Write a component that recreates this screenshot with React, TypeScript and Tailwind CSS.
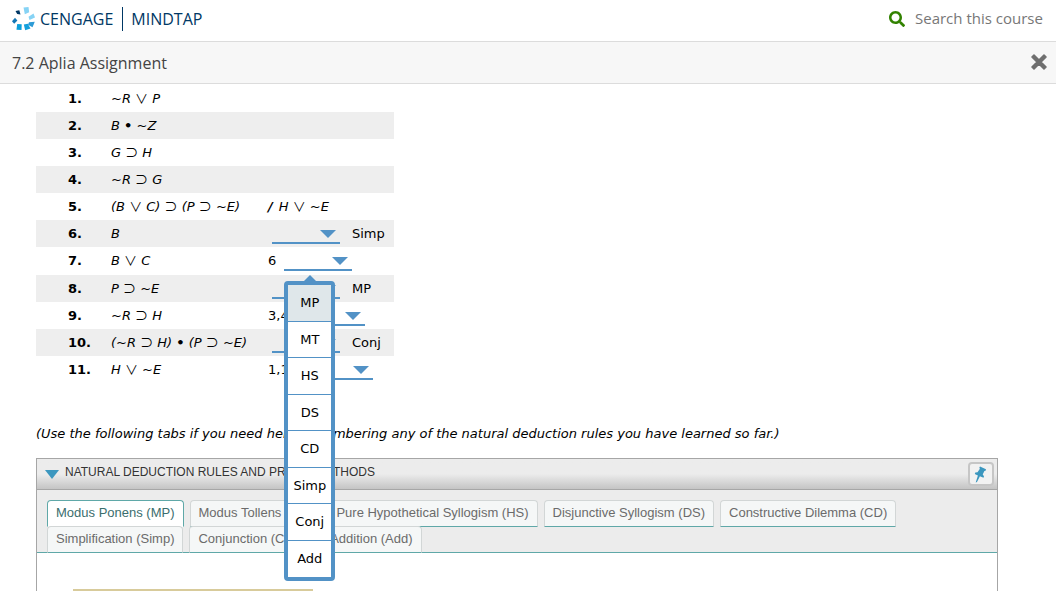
import { Fragment, useState } from "react";
import { FaSearch } from "react-icons/fa";

const rules = ["MP", "MT", "HS", "DS", "CD", "Simp", "Conj", "Add"];

type Line = {
  formula: string;
  goal?: string;
  refs?: string;
  picker?: boolean;
  rule?: string;
  menu?: boolean;
};

const lines: Line[] = [
  { formula: "~R ∨ P" },
  { formula: "B • ~Z" },
  { formula: "G ⊃ H" },
  { formula: "~R ⊃ G" },
  { formula: "(B ∨ C) ⊃ (P ⊃ ~E)", goal: "H ∨ ~E" },
  { formula: "B", picker: true, rule: "Simp" },
  { formula: "B ∨ C", refs: "6", picker: true, menu: true },
  { formula: "P ⊃ ~E", picker: true, rule: "MP" },
  { formula: "~R ⊃ H", refs: "3,4", picker: true },
  { formula: "(~R ⊃ H) • (P ⊃ ~E)", picker: true, rule: "Conj" },
  { formula: "H ∨ ~E", refs: "1,10", picker: true },
];

const tabRows = [
  [
    "Modus Ponens (MP)",
    "Modus Tollens (MT)",
    "Pure Hypothetical Syllogism (HS)",
    "Disjunctive Syllogism (DS)",
    "Constructive Dilemma (CD)",
  ],
  ["Simplification (Simp)", "Conjunction (Conj)", "Addition (Add)"],
];

function Logo() {
  return (
    <svg viewBox="0 0 24 24" className="h-6 w-6" aria-hidden="true">
      <path d="M11.500.5 16.500 0l.7 5.300-4.400 1.900z" fill="#86d3f5" />
      <path d="M16.500 9.800l5-3.300L23 10.500l-5.500 2.500z" fill="#86d3f5" />
      <path d="M17 15.200l5.800-.4-2.300 5.400-4.500-2.400z" fill="#2d9bd6" />
      <path d="M11.800 17.500l4-.8 2.700 4.800-5.300 1.800z" fill="#14a0dc" />
      <path d="M5.200 17l4.500.3-.2 5.700-5-.3z" fill="#0a9fdb" />
      <path d="M3 10.800l2.400 2.600-3.200 3.300L0 14.200z" fill="#1377b5" />
      <path d="M3.500 4l3.800-.8 1.200 4.300-3.300-.5z" fill="#003865" />
    </svg>
  );
}

function PinIcon() {
  return (
    <svg viewBox="0 0 16 18" className="h-[18px] w-4" aria-hidden="true">
      <path
        d="M7 1.500 13 4.200 12.600 5.800 11.400 5.900 9.700 9.600 11 11.300 10.500 12.800 6.900 11.300 4 17 2.700 17.400 4.900 10.400 1.800 9 2.300 7.500 4.500 7.300 6.900 3.800 6.300 2.700z"
        fill="currentColor"
      />
    </svg>
  );
}

function Formula({ text }: { text: string }) {
  return (
    <>
      {text.split(/([∨⊃•])/).map((part, i) => {
        if (part === "•") return <span key={i} className="font-bold not-italic">{part}</span>;
        if (part === "∨" || part === "⊃")
          return <span key={i} className="font-['Noto_Sans_CJK_JP',sans-serif] leading-none not-italic">{part}</span>;
        return <Fragment key={i}>{part}</Fragment>;
      })}
    </>
  );
}

function RulePicker({ label, menu }: { label: string; menu?: boolean }) {
  const [open, setOpen] = useState(Boolean(menu));
  const [value, setValue] = useState("");
  return (
    <span className="relative inline-flex h-5 w-[68px] border-b-2 border-[#5292c6]">
      <select
        aria-label={label}
        value={value}
        onChange={(e) => setValue(e.target.value)}
        className="w-full appearance-none bg-transparent pl-2 outline-none"
      >
        <option value=""></option>
        {rules.map((r) => (
          <option key={r}>{r}</option>
        ))}
      </select>
      <svg viewBox="0 0 16 8" className="pointer-events-none absolute top-1.5 right-1 h-2 w-4" aria-hidden="true">
        <path d="M0 0h16L8 8z" fill="#5292c6" />
      </svg>
      {open && (
        <div className="absolute top-6 left-0 z-10 flex flex-col items-center">
          <svg viewBox="0 0 16 8" className="-mb-0.5 h-2 w-4" aria-hidden="true">
            <path d="M0 8h16L8 0z" fill="#5292c6" />
          </svg>
          <div
            role="listbox"
            aria-label={label}
            className="grid h-[300px] w-[51px] grid-rows-8 rounded border-4 border-[#5292c6] bg-white"
          >
            {rules.map((r, i) => (
              <button
                key={r}
                role="option"
                aria-selected={i === 0}
                onClick={() => {
                  setValue(r);
                  setOpen(false);
                }}
                className="flex items-center justify-center border-b border-[#5292c6] last:border-b-0 aria-selected:bg-[#dfe7ea]"
              >
                {r}
              </button>
            ))}
          </div>
        </div>
      )}
    </span>
  );
}

export default function App() {
  const [tab, setTab] = useState("Modus Ponens (MP)");
  return (
    <div className="flex min-h-screen flex-col bg-white font-['DejaVu_Sans',sans-serif] text-[13px] text-black">
      <header className="flex h-[42px] items-center justify-between border-b border-[#dcdcdc] pr-3 pb-1 pl-3 font-['Open_Sans',sans-serif]">
        <a href="#home" className="flex items-center text-[16px] text-[#003865]">
          <Logo />
          <span className="ml-1">CENGAGE</span>
          <span className="mr-2 ml-[9px] h-6 w-px bg-[#003865]" />
          <span>MINDTAP</span>
        </a>
        <label className="flex items-center gap-2.5">
          <FaSearch className="size-4 text-[#328200]" />
          <input
            aria-label="Search this course"
            placeholder="Search this course"
            className="w-[129px] text-[15px] outline-none placeholder:text-[#777777]"
          />
        </label>
      </header>
      <div className="flex h-[42px] items-center justify-between border-b border-[#dcdcdc] bg-[#f7f7f7] pr-2 pl-3 font-['Open_Sans',sans-serif]">
        <h1 className="text-[16px] text-[#444444]">7.2 Aplia Assignment</h1>
        <button aria-label="Close" className="pb-0.5 text-[#6f6f6f]">
          <svg viewBox="0 0 18 18" className="size-[18px]" aria-hidden="true">
            <path
              d="M4 2 9 7l5-5 2 2L11 9l5 5-2 2L9 11l-5 5-2-2L7 9 2 4z"
              fill="currentColor"
              stroke="currentColor"
              strokeWidth="1.600"
              strokeLinejoin="round"
            />
          </svg>
        </button>
      </div>

      <main className="flex flex-1 flex-col pr-[58px] pl-9">
        <table className="mt-px w-[358px] table-fixed">
          <colgroup>
            <col className="w-[75px]" />
            <col className="w-[157px]" />
            <col />
          </colgroup>
          <tbody>
            {lines.map((line, i) => (
              <tr key={i} className={line.menu ? "h-7 even:bg-[#eeeeee]" : "h-[27px] even:bg-[#eeeeee]"}>
                <th scope="row" className="py-0 pl-8 text-left font-bold">
                  {i + 1}.
                </th>
                <td className="p-0 whitespace-nowrap italic">
                  <Formula text={line.formula} />
                </td>
                <td className="p-0 whitespace-nowrap">
                  {line.goal && (
                    <span className="flex gap-1.5 italic">
                      <b>/</b>
                      <span>
                        <Formula text={line.goal} />
                      </span>
                    </span>
                  )}
                  {line.picker && (
                    <span className="flex h-[27px] items-center">
                      {line.refs}
                      <span className={line.refs ? "ml-2 flex" : "ml-1 flex"}>
                        <RulePicker label={`Rule for line ${i + 1}`} menu={line.menu} />
                      </span>
                      {line.rule && <span className="ml-3">{line.rule}</span>}
                    </span>
                  )}
                </td>
              </tr>
            ))}
          </tbody>
        </table>

        <p className="mt-[41px] leading-5 italic">
          (Use the following tabs if you need help remembering any of the natural deduction rules you have learned so far.)
        </p>

        <section className="mt-3.5 flex flex-1 flex-col border border-b-0 border-[#a6a6a6] font-['Liberation_Sans',sans-serif]">
          <div className="flex h-[31px] items-center justify-between border-b border-[#a6a6a6] bg-linear-to-b from-[#ececec] from-50% to-[#c4c4c4] pr-[3px] pl-2">
            <button className="flex items-center gap-1.5 pb-1 text-[12px] text-[#333333]">
              <svg viewBox="0 0 14 9" className="mt-1 h-[9px] w-3.5" aria-hidden="true">
                <path d="M0 0h14L7 9z" fill="#3c97bf" />
              </svg>
              NATURAL DEDUCTION RULES AND PROOF METHODS
            </button>
            <button
              aria-label="Pin"
              className="flex h-6 w-[26px] items-center justify-center rounded border-2 border-[#c6c6c6] bg-[#f2f2f2] text-[#3c97bf]"
            >
              <PinIcon />
            </button>
          </div>
          <div role="tablist" className="border-b border-[#5fa8a8] bg-[#ececec] px-2.5 pt-2.5">
            {tabRows.map((row, r) => (
              <div key={r} className="-mb-px flex gap-1.5">
                {row.map((name) => (
                  <button
                    key={name}
                    role="tab"
                    aria-selected={tab === name}
                    onClick={() => setTab(name)}
                    className="h-[27px] rounded-t border border-[#d2d6d6] border-b-[#5fa8a8] bg-[#f5f7f7] px-2 pb-0.5 text-[13px] text-[#6b6b6b] aria-selected:border-[#5fa8a8] aria-selected:border-b-white aria-selected:bg-white aria-selected:text-[#3b6e6e]"
                  >
                    {name}
                  </button>
                ))}
              </div>
            ))}
          </div>
          <div role="tabpanel" className="flex-1 px-9 pt-9">
            <div className="h-0.5 w-60 bg-[#d8cb9b]" />
          </div>
        </section>
      </main>
    </div>
  );
}
